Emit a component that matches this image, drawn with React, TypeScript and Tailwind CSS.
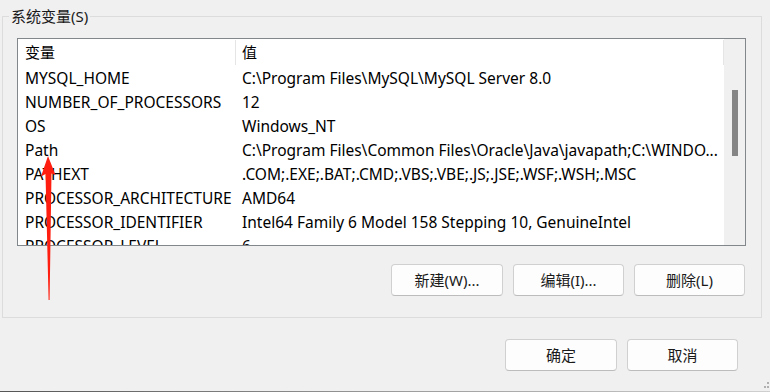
import React from 'react'

const rows: [string, string][] = [
  ['MYSQL_HOME', 'C:\\Program Files\\MySQL\\MySQL Server 8.0'],
  ['NUMBER_OF_PROCESSORS', '12'],
  ['OS', 'Windows_NT'],
  ['Path', 'C:\\Program Files\\Common Files\\Oracle\\Java\\javapath;C:\\WINDO...'],
  ['PATHEXT', '.COM;.EXE;.BAT;.CMD;.VBS;.VBE;.JS;.JSE;.WSF;.WSH;.MSC'],
  ['PROCESSOR_ARCHITECTURE', 'AMD64'],
  ['PROCESSOR_IDENTIFIER', 'Intel64 Family 6 Model 158 Stepping 10, GenuineIntel'],
  ['PROCESSOR_LEVEL', '6'],
]

function Btn({ label, w = 'w-[112px]' }: { label: string; w?: string }) {
  return (
    <button className={`flex h-[32px] ${w} items-center justify-center rounded-[4px] border border-[#d0d0d0] border-b-[#bcbcbc] bg-[#fdfdfd] text-[15px] text-[#1a1a1a]`}>
      {label}
    </button>
  )
}

export default function App() {
  return (
    <div
      className="relative flex h-[392px] w-[770px] flex-col overflow-hidden bg-[#f0f0f0] text-black"
      style={{ fontFamily: '"Noto Sans", "Noto Sans CJK SC", sans-serif' }}
    >
      {/* 系统变量 group */}
      <div className="relative ml-[2px] mt-[16px] flex h-[302px] w-[760px] flex-col border border-[#dcdcdc] pl-[14px] pt-[21px]">
        <span className="absolute left-[6px] top-[-11px] bg-[#f0f0f0] px-[2px] text-[15px] leading-[20px] text-[#1a1a1a]">
          系统变量(S)
        </span>

        {/* list box */}
        <div className="flex h-[208px] w-[729px] border border-[#82878c] bg-white">
          <div className="flex min-w-0 flex-1 flex-col overflow-hidden">
            <div className="flex h-[27px] shrink-0 items-center text-[15px]">
              <div className="flex h-full w-[217px] items-center pl-[7px]">
                <span>变量</span>
              </div>
              <div className="h-[25px] w-px bg-[#e5e5e5]" />
              <div className="flex-1 pl-[6px]">值</div>
              <div className="h-[25px] w-px bg-[#e5e5e5]" />
            </div>
            {rows.map(([k, v]) => (
              <div key={k} className="flex h-[24px] shrink-0 items-center whitespace-nowrap pt-[2px] text-[15.5px]">
                <div className="w-[218px] overflow-hidden pl-[7px]">{k}</div>
                <div className="pl-[6px]">{v}</div>
              </div>
            ))}
          </div>
          {/* scrollbar */}
          <div className="flex w-[21px] shrink-0 justify-center bg-[#f0f0f0] pt-[51px]">
            <div className="h-[66px] w-[6px] bg-[#858585]" />
          </div>
        </div>

        <div className="mt-[18px] flex w-[729px] justify-end gap-[10px] pr-px">
          <Btn label="新建(W)..." />
          <Btn label="编辑(I)..." w="w-[111px]" />
          <Btn label="删除(L)" w="w-[111px]" />
        </div>
      </div>

      <div className="mt-[21px] flex justify-end gap-[10px] pr-[32px]">
        <Btn label="确定" />
        <Btn label="取消" w="w-[111px]" />
      </div>

      <div className="mt-auto h-px w-full bg-gradient-to-r from-[#555555] via-[#9a9a9a] to-[#d0d0d0]" />

      {/* red annotation arrow */}
      <svg className="pointer-events-none absolute left-0 top-0" width="770" height="392">
        <polygon points="48,156 55.5,175 51.5,173.5 49.6,300 48.6,300 45.5,174 41,176.5" fill="#ff1e0f" />
      </svg>

      {/* resize grip */}
      <svg className="absolute bottom-[2px] right-0" width="6" height="8">
        <rect x="3" y="0" width="2" height="2" fill="#b0b0b0" />
        <rect x="0" y="4" width="2" height="2" fill="#b0b0b0" />
        <rect x="3" y="4" width="2" height="2" fill="#b0b0b0" />
      </svg>
    </div>
  )
}
